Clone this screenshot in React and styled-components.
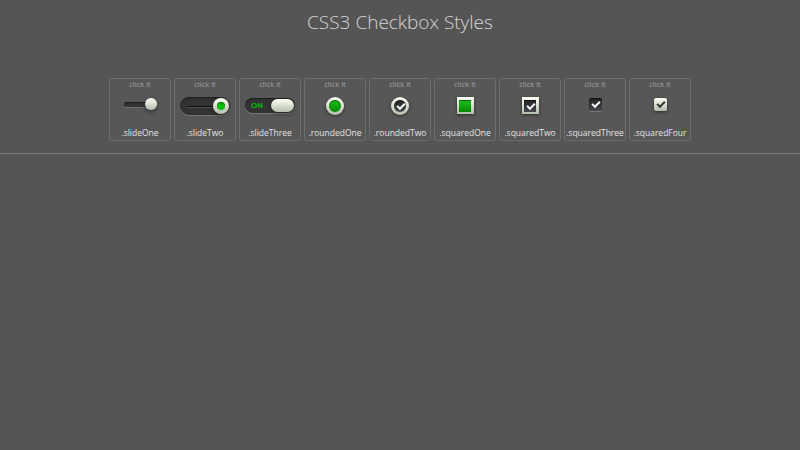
import React from "react";
import styled, { createGlobalStyle } from "styled-components";

const Global = createGlobalStyle`
  html, body {
    margin: 0;
    padding: 0;
    background: #555555;
    font-family: "Open Sans", "Liberation Sans", sans-serif;
  }
`;

const Page = styled.div`
  width: 800px;
  height: 450px;
  background: #555555;
  display: flex;
  flex-direction: column;
`;

const Title = styled.h1`
  margin: 8px 0 0;
  height: 28px;
  text-align: center;
  font-size: 19px;
  font-weight: 300;
  color: #d6d6d6;
  line-height: 28px;
`;

const Row = styled.div`
  display: flex;
  justify-content: center;
  gap: 3px;
  margin-top: 42px;
`;

const Cell = styled.div`
  width: 60px;
  height: 61px;
  border: 1px solid #6e6e6e;
  border-radius: 3px;
  background: #575757;
  display: flex;
  flex-direction: column;
  align-items: center;
`;

const Hint = styled.span`
  margin-top: 0;
  font-size: 7.5px;
  color: #a2a2a2;
  line-height: 10px;
`;

const Stage = styled.div`
  flex: 1;
  display: flex;
  align-items: center;
  justify-content: center;
  width: 100%;
`;

const Label = styled.span`
  font-size: 8.5px;
  color: #e4e4e4;
  line-height: 12px;
  margin-bottom: 1px;
`;

const Rule = styled.div`
  margin-top: 12px;
  height: 1px;
  background: #7a7a7a;
`;

/* slideOne */
const TrackOne = styled.div`
  position: relative;
  width: 32px;
  height: 5px;
  border-radius: 3px;
  background: #333;
  box-shadow: inset 0 1px 1px rgba(0, 0, 0, 0.5), 0 1px 0 rgba(255, 255, 255, 0.15);
  margin-top: -7px;
`;

const KnobOne = styled.div`
  position: absolute;
  right: -1px;
  top: -4px;
  width: 12px;
  height: 12px;
  border-radius: 50%;
  background: linear-gradient(#fcfff4, #dfe5d7 40%, #b3bead);
  box-shadow: 0 2px 4px rgba(0, 0, 0, 0.4);
`;

/* slideTwo */
const TrackTwo = styled.div`
  position: relative;
  width: 50px;
  height: 18px;
  border-radius: 9px;
  background: #333;
  box-shadow: inset 0 1px 2px rgba(0, 0, 0, 0.5), 0 1px 0 rgba(255, 255, 255, 0.2);
  margin-top: -5px;
`;

const LineTwo = styled.div`
  position: absolute;
  left: 8px;
  top: 9px;
  width: 32px;
  height: 1px;
  background: #111;
  box-shadow: 0 1px 0 rgba(255, 255, 255, 0.15);
`;

const KnobTwo = styled.div`
  position: absolute;
  right: 1px;
  top: 1px;
  width: 16px;
  height: 16px;
  border-radius: 50%;
  background: linear-gradient(#fcfff4, #dfe5d7 40%, #b3bead);
  box-shadow: 0 2px 4px rgba(0, 0, 0, 0.3);
  display: flex;
  align-items: center;
  justify-content: center;
  &::after {
    content: "";
    width: 8px;
    height: 8px;
    border-radius: 50%;
    background: #00bf00;
    box-shadow: inset 0 1px 1px rgba(0, 0, 0, 0.5);
  }
`;

/* slideThree */
const TrackThree = styled.div`
  position: relative;
  width: 50px;
  height: 15px;
  border-radius: 8px;
  background: #333;
  box-shadow: inset 0 1px 1px rgba(0, 0, 0, 0.5), 0 1px 0 rgba(255, 255, 255, 0.2);
  margin-top: -6px;
`;

const OnText = styled.span`
  position: absolute;
  left: 6px;
  top: 0;
  line-height: 15px;
  font-size: 8px;
  font-weight: 700;
  color: #00bf00;
  font-family: "Liberation Sans", Arial, sans-serif;
`;

const KnobThree = styled.div`
  position: absolute;
  right: 1px;
  top: 1px;
  width: 23px;
  height: 13px;
  border-radius: 7px;
  background: linear-gradient(#fcfff4, #dfe5d7 40%, #b3bead);
  box-shadow: 0 2px 4px rgba(0, 0, 0, 0.3);
`;

/* rounded */
const Round = styled.div`
  width: 18px;
  height: 18px;
  border-radius: 50%;
  background: linear-gradient(#fcfff4, #dfe5d7 40%, #b3bead);
  box-shadow: 0 1px 3px rgba(0, 0, 0, 0.5);
  display: flex;
  align-items: center;
  justify-content: center;
  margin-top: -5px;
`;

const RoundInner = styled.div`
  position: relative;
  width: 12px;
  height: 12px;
  border-radius: 50%;
  background: ${(p) =>
    p.dark ? "linear-gradient(#222, #45484d)" : "linear-gradient(#1ec41e, #008a00)"};
  box-shadow: inset 0 1px 1px rgba(0, 0, 0, 0.5);
`;

const Tick = styled.span`
  position: absolute;
  left: ${(p) => p.x}px;
  top: ${(p) => p.y}px;
  width: ${(p) => p.w}px;
  height: ${(p) => p.h}px;
  border: ${(p) => p.t}px solid ${(p) => p.c};
  border-top: none;
  border-right: none;
  transform: rotate(-45deg);
`;

/* squared */
const Square = styled.div`
  width: 17px;
  height: 17px;
  background: linear-gradient(#fcfff4, #dfe5d7 40%, #b3bead);
  box-shadow: 0 1px 3px rgba(0, 0, 0, 0.5);
  display: flex;
  align-items: center;
  justify-content: center;
  margin-top: -5px;
`;

const SquareInner = styled.div`
  position: relative;
  width: 12px;
  height: 12px;
  background: ${(p) =>
    p.dark ? "linear-gradient(#222, #45484d)" : "linear-gradient(#1ec41e, #008a00)"};
  box-shadow: inset 0 1px 1px rgba(0, 0, 0, 0.5);
`;

const Small = styled.div`
  position: relative;
  width: 13px;
  height: 13px;
  border-radius: 2px;
  background: ${(p) =>
    p.light ? "linear-gradient(#fcfff4, #dfe5d7 40%, #b3bead)" : "linear-gradient(#222, #45484d)"};
  box-shadow: ${(p) =>
    p.light
      ? "0 1px 3px rgba(0,0,0,0.5)"
      : "inset 0 1px 1px rgba(0,0,0,0.5), 0 1px 0 rgba(255,255,255,0.2)"};
  margin-top: ${(p) => p.mt}px;
`;

const items = [
  {
    name: ".slideOne",
    el: (
      <TrackOne>
        <KnobOne />
      </TrackOne>
    ),
  },
  {
    name: ".slideTwo",
    el: (
      <TrackTwo>
        <LineTwo />
        <KnobTwo />
      </TrackTwo>
    ),
  },
  {
    name: ".slideThree",
    el: (
      <TrackThree>
        <OnText>ON</OnText>
        <KnobThree />
      </TrackThree>
    ),
  },
  {
    name: ".roundedOne",
    el: (
      <Round>
        <RoundInner />
      </Round>
    ),
  },
  {
    name: ".roundedTwo",
    el: (
      <Round>
        <RoundInner dark>
          <Tick x={3} y={3} w={6} h={3} t={2} c="#fff" />
        </RoundInner>
      </Round>
    ),
  },
  {
    name: ".squaredOne",
    el: (
      <Square>
        <SquareInner />
      </Square>
    ),
  },
  {
    name: ".squaredTwo",
    el: (
      <Square>
        <SquareInner dark>
          <Tick x={3} y={3} w={6} h={3} t={2} c="#fff" />
        </SquareInner>
      </Square>
    ),
  },
  {
    name: ".squaredThree",
    el: (
      <Small mt={-8}>
        <Tick x={3} y={3} w={6} h={3} t={2} c="#fff" />
      </Small>
    ),
  },
  {
    name: ".squaredFour",
    el: (
      <Small light mt={-7}>
        <Tick x={3} y={3} w={6} h={3} t={2} c="#333" />
      </Small>
    ),
  },
];

export default function App() {
  return (
    <Page>
      <Global />
      <Title>CSS3 Checkbox Styles</Title>
      <Row>
        {items.map((it) => (
          <Cell key={it.name}>
            <Hint>click it</Hint>
            <Stage>{it.el}</Stage>
            <Label>{it.name}</Label>
          </Cell>
        ))}
      </Row>
      <Rule />
    </Page>
  );
}
